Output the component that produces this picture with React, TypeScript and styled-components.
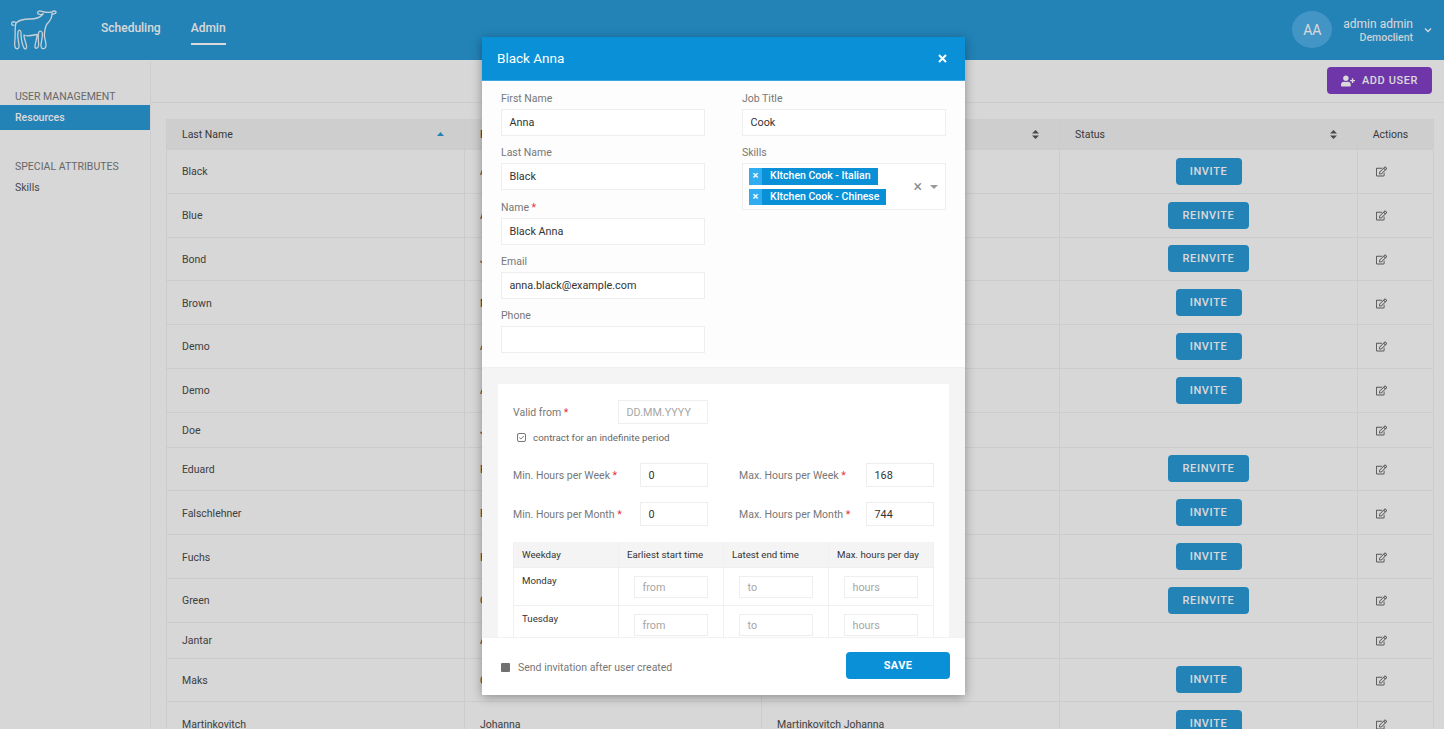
import React from "react";
import styled, { createGlobalStyle } from "styled-components";
import { FaRegEdit, FaUserPlus } from "react-icons/fa";

const Global = createGlobalStyle`
  html, body { margin: 0; padding: 0; height: 100%; overflow: hidden; background: #fdfdfd; }
  body { font-family: Roboto, "Liberation Sans", sans-serif; -webkit-font-smoothing: antialiased; }
  * { box-sizing: border-box; }
`;

const Page = styled.div`
  position: relative;
  width: 1444px;
  height: 729px;
  overflow: hidden;
  background: #fdfdfd;
`;
const Header = styled.header`
  height: 61px;
  background: #2a9ad8;
  border-bottom: 1px solid #fff;
  display: flex;
  align-items: center;
  color: #fff;
  padding-left: 10px;
  padding-right: 12px;
`;
const LogoBox = styled.div`
  width: 91px;
  height: 44px;
  display: flex;
  align-items: center;
`;
const NavLink = styled.div<{ $active?: boolean }>`
  font-size: 12px;
  font-weight: 500;
  line-height: 16px;
  margin-right: 30px;
  padding-top: 5px;
  padding-bottom: 7px;
  border-bottom: 2px solid ${(p) => (p.$active ? "#fff" : "transparent")};
  color: #fff;
`;
const Spacer = styled.div`
  flex: 1;
`;
const Avatar = styled.div`
  width: 40px;
  height: 37px;
  border-radius: 50%;
  background: #4fb0e8;
  display: flex;
  align-items: center;
  justify-content: center;
  font-size: 14px;
  margin-right: 11px;
  margin-top: -1px;
`;
const UserBox = styled.div`
  text-align: right;
  margin-right: 11px;
`;
const UserName = styled.div`
  font-size: 12px;
  line-height: 16px;
`;
const UserClient = styled.div`
  font-size: 10.5px;
  font-weight: 500;
  line-height: 12px;
  opacity: 0.9;
`;
const Main = styled.div`
  display: flex;
  height: 668px;
`;
const Sidebar = styled.aside`
  width: 151px;
  flex: none;
  padding-top: 29px;
  border-right: 1px solid #f2f2f2;
`;
const SideTitle = styled.div<{ $gap?: boolean }>`
  font-size: 10.5px;
  line-height: 13px;
  color: #7a7a7a;
  padding-left: 15px;
  margin-top: ${(p) => (p.$gap ? "30px" : "0")};
  margin-bottom: 2px;
`;
const SideItem = styled.div<{ $active?: boolean }>`
  height: 25px;
  line-height: 26px;
  font-size: 10.5px;
  padding-left: 15px;
  width: 150px;
  font-weight: ${(p) => (p.$active ? 500 : 400)};
  color: ${(p) => (p.$active ? "#fff" : "#555")};
  background: ${(p) => (p.$active ? "#2a9ad8" : "transparent")};
`;
const Content = styled.main`
  flex: 1;
  min-width: 0;
`;
const Toolbar = styled.div`
  height: 42px;
  border-bottom: 1px solid #f0f0f0;
  display: flex;
  justify-content: flex-end;
  align-items: center;
  padding-right: 12px;
  padding-bottom: 1px;
`;
const AddButton = styled.div`
  width: 105px;
  height: 27px;
  margin-top: -1px;
  border-radius: 4px;
  background: #8340c8;
  color: #fff;
  font-size: 11px;
  font-weight: 500;
  letter-spacing: 0.6px;
  display: flex;
  align-items: center;
  justify-content: center;
  gap: 7px;
`;
const Table = styled.div`
  margin: 16px 12px 0 15px;
  width: 1267px;
  border-left: 1px solid #f0f0f0;
`;
const RowBox = styled.div`
  display: grid;
  grid-template-columns: 298px 297px 298px 298px 76px;
  border-bottom: 1px solid #f0f0f0;
  font-size: 10.5px;
  color: #4a4a4a;
`;
const HeadRow = styled(RowBox)`
  height: 31px;
  background: #f3f3f3;
  color: #444;
`;
const Cell = styled.div<{ $h?: number }>`
  padding-left: 15px;
  display: flex;
  align-items: center;
  height: ${(p) => (p.$h ? p.$h + "px" : "auto")};
  border-right: 1px solid #f0f0f0;
`;
const TextCell = styled(Cell)`
  padding-top: 1px;
`;
const HeadCell = styled(Cell)`
  justify-content: space-between;
  padding-right: 20px;
`;
const ActionHead = styled(Cell)`
  justify-content: center;
  padding-left: 0;
  padding-right: 10px;
`;
const StatusCell = styled(Cell)`
  justify-content: center;
  padding-left: 0;
`;
const ActionCell = styled(Cell)`
  justify-content: center;
  padding-left: 0;
  padding-right: 28px;
  padding-top: 1px;
  color: #666;
`;
const StatusButton = styled.div<{ $wide?: boolean }>`
  width: ${(p) => (p.$wide ? "81px" : "66px")};
  height: 27px;
  border-radius: 4px;
  background: #2a9ad8;
  color: #fff;
  font-size: 11px;
  font-weight: 500;
  letter-spacing: 0.6px;
  display: flex;
  align-items: center;
  justify-content: center;
`;
const Overlay = styled.div`
  position: absolute;
  inset: 0;
  background: rgba(0, 0, 0, 0.15);
`;
const Modal = styled.section`
  position: absolute;
  left: 482px;
  top: 37px;
  width: 483px;
  height: 658px;
  background: #fff;
  box-shadow: 0 2px 10px rgba(0, 0, 0, 0.35);
  display: flex;
  flex-direction: column;
  overflow: hidden;
`;
const ModalHeader = styled.div`
  height: 44px;
  flex: none;
  background: #0a90d6;
  border-bottom: 1px solid #3ba6e0;
  color: #fff;
  display: flex;
  align-items: center;
  justify-content: space-between;
  padding: 0 18px 1px 15px;
  font-size: 13.5px;
`;
const ModalScroll = styled.div`
  flex: 1;
  min-height: 0;
  overflow: hidden;
`;
const TopForm = styled.div`
  height: 287px;
  padding: 11px 19px 0;
  display: grid;
  grid-template-columns: 204px 204px;
  column-gap: 37px;
  align-content: start;
  background: #fdfdfd;
  border-bottom: 1px solid #f0f0f0;
`;
const Column = styled.div`
  display: flex;
  flex-direction: column;
`;
const Label = styled.div`
  font-size: 10.5px;
  line-height: 14px;
  color: #777;
  margin-bottom: 3px;
`;
const Star = styled.span`
  color: #e8303a;
`;
const TextBox = styled.div<{ $w?: number; $h?: number; $placeholder?: boolean }>`
  width: ${(p) => (p.$w ? p.$w + "px" : "100%")};
  height: ${(p) => (p.$h ?? 27) + "px"};
  border: 1px solid #eeeeee;
  background: #fff;
  flex: none;
  font-size: 10.8px;
  padding-left: 7.5px;
  display: flex;
  align-items: center;
  color: ${(p) => (p.$placeholder ? "#a6a6a6" : "#333")};
`;
const Field = styled.div`
  margin-bottom: 10.3px;
`;
const SkillBox = styled.div`
  height: 47px;
  border: 1px solid #eeeeee;
  background: #fff;
  padding: 4px 6px;
  display: flex;
  position: relative;
`;
const Tags = styled.div`
  display: flex;
  flex-direction: column;
  align-items: flex-start;
  gap: 4px;
`;
const Tag = styled.div`
  display: flex;
  height: 17px;
  font-size: 10.5px;
  font-weight: 500;
  color: #fff;
  background: #0a90d6;
  line-height: 15.5px;
  padding-right: 7px;
`;
const TagX = styled.span`
  width: 13px;
  background: #2fadf0;
  margin-right: 8px;
  text-align: center;
  font-size: 11px;
`;
const SkillControls = styled.div`
  position: absolute;
  right: 7px;
  top: 13px;
  display: flex;
  align-items: center;
  gap: 8px;
  color: #8a8a8a;
`;
const Caret = styled.span`
  width: 0;
  height: 0;
  border-left: 4px solid transparent;
  border-right: 4px solid transparent;
  border-top: 4px solid #999;
`;
const GraySection = styled.div`
  background: #f4f4f4;
  padding: 16px 16px 0 16px;
`;
const Card = styled.div`
  background: #fff;
  padding: 16px 15px 0 15px;
  height: 300px;
`;
const ValidRow = styled.div`
  display: flex;
  align-items: center;
  height: 24px;
`;
const InlineLabel = styled.div<{ $w: number }>`
  width: ${(p) => p.$w}px;
  flex: none;
  font-size: 10.5px;
  color: #777;
`;
const CheckRow = styled.div`
  display: flex;
  align-items: center;
  gap: 7px;
  font-size: 9.8px;
  color: #666;
  padding-left: 4px;
  margin-top: 6px;
  height: 14px;
`;
const HoursRow = styled.div<{ $first?: boolean }>`
  display: flex;
  align-items: center;
  height: 24px;
  margin-top: ${(p) => (p.$first ? "19px" : "15px")};
`;
const HourGap = styled.div`
  width: 31px;
  flex: none;
`;
const WeekTable = styled.div`
  margin-top: 16px;
  width: 421px;
  border-left: 1px solid #f0f0f0;
`;
const WeekRow = styled.div`
  display: grid;
  grid-template-columns: 105px 105px 105px 105px;
  border-bottom: 1px solid #f0f0f0;
  font-size: 9.7px;
  color: #333;
`;
const WeekHead = styled(WeekRow)`
  height: 26px;
  background: #f4f4f4;
`;
const WeekHeadCell = styled.div`
  padding-left: 8px;
  display: flex;
  align-items: center;
  border-right: 1px solid #f0f0f0;
`;
const DayCell = styled.div`
  height: 37.4px;
  padding: 7px 0 0 8px;
  line-height: 12px;
  border-right: 1px solid #f0f0f0;
`;
const TimeCell = styled.div`
  height: 37.4px;
  padding: 8px 0 0 15px;
  border-right: 1px solid #f0f0f0;
`;
const ModalFooter = styled.div`
  height: 58px;
  flex: none;
  background: #fff;
  border-top: 1px solid #f2f2f2;
  display: flex;
  align-items: center;
  padding: 0 15px 0 19px;
  font-size: 10.5px;
  color: #777;
`;
const SendBox = styled.span`
  width: 9px;
  height: 9px;
  background: #707070;
  border-radius: 1px;
  margin-right: 8px;
  margin-top: 2px;
`;
const SendText = styled.span`
  margin-top: 2px;
  font-size: 10.5px;
`;
const SaveButton = styled.div`
  width: 104px;
  height: 27px;
  margin-top: -2px;
  border-radius: 4px;
  background: #0a90d6;
  color: #fff;
  font-size: 11px;
  font-weight: 700;
  letter-spacing: 0.4px;
  display: flex;
  align-items: center;
  justify-content: center;
`;

const Logo = () => (
  <svg width="48" height="42" viewBox="10 8 48 42" fill="none" stroke="#eaf5fb" strokeWidth="1.300" strokeLinecap="round" strokeLinejoin="round">
    <path d="M14 24C12 25 11 23 12 21.500C13.500 20 15.500 21 16 22C19 19 24 18 30 18C35 18 40 17 43 13" />
    <path d="M43 13C41 14 38 13.500 37.500 12C37.500 10 40 9.500 42 10.500C46 11.500 50 11.500 52 11C53 9.800 56 9.500 56 11C56 12.500 53.500 13 52 13" />
    <path d="M52 13C52 17 50 20 47 23C45.500 25 45 28 44.500 32" />
    <path d="M44.500 32C43.500 36 46.500 41 46 45C45.500 48.500 41.500 48.500 41 45.500C40.500 42 42.500 38 42.500 33C42.500 30 39.500 29 38.500 32C37.500 36 39 41 38.500 45C38 48 34.500 48 35 45C35.500 41 37 37 37 34" />
    <path d="M16 22C14.500 27 15.500 33 15 38C14.500 42 14 46 16 47.500C18 48.500 19.500 46.500 19 44C18.500 40 17 36 18 31C19 28 21 29 21 32C21 37 22 43 24 47C25.500 49 27 47.500 26.500 45C26 41 23.500 37 24 34C25 35.500 32 34.500 37 33.500" />
  </svg>
);
const SortBoth = () => (
  <svg width="7" height="9" viewBox="0 0 7 9" fill="#555">
    <path d="M3.500 0L7 3.600H0Z" />
    <path d="M3.500 9L0 5.400H7Z" />
  </svg>
);
const SortUp = () => (
  <svg width="7" height="4" viewBox="0 0 7 4" fill="#2a9ad8">
    <path d="M3.500 0L7 4H0Z" />
  </svg>
);
const Chevron = () => (
  <svg width="8" height="6" viewBox="0 0 8 6" fill="none" stroke="#fff" strokeWidth="1.300">
    <path d="M1 1.500L4 4.500L7 1.500" />
  </svg>
);
const CheckIcon = () => (
  <svg width="9" height="9" viewBox="0 0 9 9" fill="none" stroke="#555" strokeWidth="0.800">
    <rect x=".5" y=".5" width="8" height="8" rx="1.500" />
    <path d="M2.300 4.600L3.900 6L6.700 3" />
  </svg>
);
const CloseIcon = () => (
  <svg width="9" height="9" viewBox="0 0 9 9" stroke="#fff" strokeWidth="2">
    <path d="M1 1L8 8M8 1L1 8" />
  </svg>
);

type Row = { last: string; first: string; full: string; status?: "INVITE" | "REINVITE"; h: number };
const rows: Row[] = [
  { last: "Black", first: "Anna", full: "Black Anna", status: "INVITE", h: 42.78 },
  { last: "Blue", first: "Alex", full: "Blue Alex", status: "REINVITE", h: 42.78 },
  { last: "Bond", first: "James", full: "Bond James", status: "REINVITE", h: 42.78 },
  { last: "Brown", first: "Mary", full: "Brown Mary", status: "INVITE", h: 42.78 },
  { last: "Demo", first: "Anna", full: "Demo Anna", status: "INVITE", h: 42.78 },
  { last: "Demo", first: "Alex", full: "Demo Alex", status: "INVITE", h: 42.78 },
  { last: "Doe", first: "John", full: "Doe John", h: 34 },
  { last: "Eduard", first: "Frank", full: "Eduard Frank", status: "REINVITE", h: 42.78 },
  { last: "Falschlehner", first: "Franz", full: "Falschlehner Franz", status: "INVITE", h: 42.78 },
  { last: "Fuchs", first: "Hans", full: "Fuchs Hans", status: "INVITE", h: 42.78 },
  { last: "Green", first: "Chris", full: "Green Chris", status: "REINVITE", h: 42.78 },
  { last: "Jantar", first: "Adam", full: "Jantar Adam", h: 35 },
  { last: "Maks", first: "Carl", full: "Maks Carl", status: "INVITE", h: 42.5 },
  { last: "Martinkovitch", first: "Johanna", full: "Martinkovitch Johanna", status: "INVITE", h: 42.78 },
];

const leftFields = [
  { label: "First Name", value: "Anna" },
  { label: "Last Name", value: "Black" },
  { label: "Name", value: "Black Anna", required: true },
  { label: "Email", value: "anna.black@example.com" },
  { label: "Phone", value: "" },
];

const Req = ({ children }: { children: React.ReactNode }) => (
  <>
    {children} <Star>*</Star>
  </>
);

export default function App() {
  return (
    <Page>
      <Global />
      <Header>
        <LogoBox>
          <Logo />
        </LogoBox>
        <NavLink>Scheduling</NavLink>
        <NavLink $active>Admin</NavLink>
        <Spacer />
        <Avatar>AA</Avatar>
        <UserBox>
          <UserName>admin admin</UserName>
          <UserClient>Democlient</UserClient>
        </UserBox>
        <Chevron />
      </Header>
      <Main>
        <Sidebar>
          <SideTitle>USER MANAGEMENT</SideTitle>
          <SideItem $active>Resources</SideItem>
          <SideTitle $gap>SPECIAL ATTRIBUTES</SideTitle>
          <SideItem>Skills</SideItem>
        </Sidebar>
        <Content>
          <Toolbar>
            <AddButton>
              <FaUserPlus size={14} />
              ADD USER
            </AddButton>
          </Toolbar>
          <Table>
            <HeadRow>
              <HeadCell>
                Last Name
                <SortUp />
              </HeadCell>
              <HeadCell>
                First Name
                <SortBoth />
              </HeadCell>
              <HeadCell>
                Name
                <SortBoth />
              </HeadCell>
              <HeadCell>
                Status
                <SortBoth />
              </HeadCell>
              <ActionHead>Actions</ActionHead>
            </HeadRow>
            {rows.map((r, i) => (
              <RowBox key={i}>
                <TextCell $h={r.h}>{r.last}</TextCell>
                <TextCell $h={r.h}>{r.first}</TextCell>
                <TextCell $h={r.h}>{r.full}</TextCell>
                <StatusCell $h={r.h}>
                  {r.status && <StatusButton $wide={r.status === "REINVITE"}>{r.status}</StatusButton>}
                </StatusCell>
                <ActionCell $h={r.h}>
                  <FaRegEdit size={11} />
                </ActionCell>
              </RowBox>
            ))}
          </Table>
        </Content>
      </Main>
      <Overlay />
      <Modal>
        <ModalHeader>
          Black Anna
          <CloseIcon />
        </ModalHeader>
        <ModalScroll>
          <TopForm>
            <Column>
              {leftFields.map((f) => (
                <Field key={f.label}>
                  <Label>{f.required ? <Req>{f.label}</Req> : f.label}</Label>
                  <TextBox>{f.value}</TextBox>
                </Field>
              ))}
            </Column>
            <Column>
              <Field>
                <Label>Job Title</Label>
                <TextBox>Cook</TextBox>
              </Field>
              <Field>
                <Label>Skills</Label>
                <SkillBox>
                  <Tags>
                    <Tag>
                      <TagX>×</TagX>KItchen Cook - Italian
                    </Tag>
                    <Tag>
                      <TagX>×</TagX>KItchen Cook - Chinese
                    </Tag>
                  </Tags>
                  <SkillControls>
                    <span>×</span>
                    <Caret />
                  </SkillControls>
                </SkillBox>
              </Field>
            </Column>
          </TopForm>
          <GraySection>
            <Card>
              <ValidRow>
                <InlineLabel $w={105}>
                  <Req>Valid from</Req>
                </InlineLabel>
                <TextBox $w={90} $h={24} $placeholder>
                  DD.MM.YYYY
                </TextBox>
              </ValidRow>
              <CheckRow>
                <CheckIcon />
                contract for an indefinite period
              </CheckRow>
              <HoursRow $first>
                <InlineLabel $w={127}>
                  <Req>Min. Hours per Week</Req>
                </InlineLabel>
                <TextBox $w={68} $h={24}>
                  0
                </TextBox>
                <HourGap />
                <InlineLabel $w={127}>
                  <Req>Max. Hours per Week</Req>
                </InlineLabel>
                <TextBox $w={68} $h={24}>
                  168
                </TextBox>
              </HoursRow>
              <HoursRow>
                <InlineLabel $w={127}>
                  <Req>Min. Hours per Month</Req>
                </InlineLabel>
                <TextBox $w={68} $h={24}>
                  0
                </TextBox>
                <HourGap />
                <InlineLabel $w={127}>
                  <Req>Max. Hours per Month</Req>
                </InlineLabel>
                <TextBox $w={68} $h={24}>
                  744
                </TextBox>
              </HoursRow>
              <WeekTable>
                <WeekHead>
                  <WeekHeadCell>Weekday</WeekHeadCell>
                  <WeekHeadCell>Earliest start time</WeekHeadCell>
                  <WeekHeadCell>Latest end time</WeekHeadCell>
                  <WeekHeadCell>Max. hours per day</WeekHeadCell>
                </WeekHead>
                {["Monday", "Tuesday"].map((d) => (
                  <WeekRow key={d}>
                    <DayCell>{d}</DayCell>
                    <TimeCell>
                      <TextBox $w={74} $h={22} $placeholder>
                        from
                      </TextBox>
                    </TimeCell>
                    <TimeCell>
                      <TextBox $w={74} $h={22} $placeholder>
                        to
                      </TextBox>
                    </TimeCell>
                    <TimeCell>
                      <TextBox $w={74} $h={22} $placeholder>
                        hours
                      </TextBox>
                    </TimeCell>
                  </WeekRow>
                ))}
              </WeekTable>
            </Card>
          </GraySection>
        </ModalScroll>
        <ModalFooter>
          <SendBox />
          <SendText>Send invitation after user created</SendText>
          <Spacer />
          <SaveButton>SAVE</SaveButton>
        </ModalFooter>
      </Modal>
    </Page>
  );
}
